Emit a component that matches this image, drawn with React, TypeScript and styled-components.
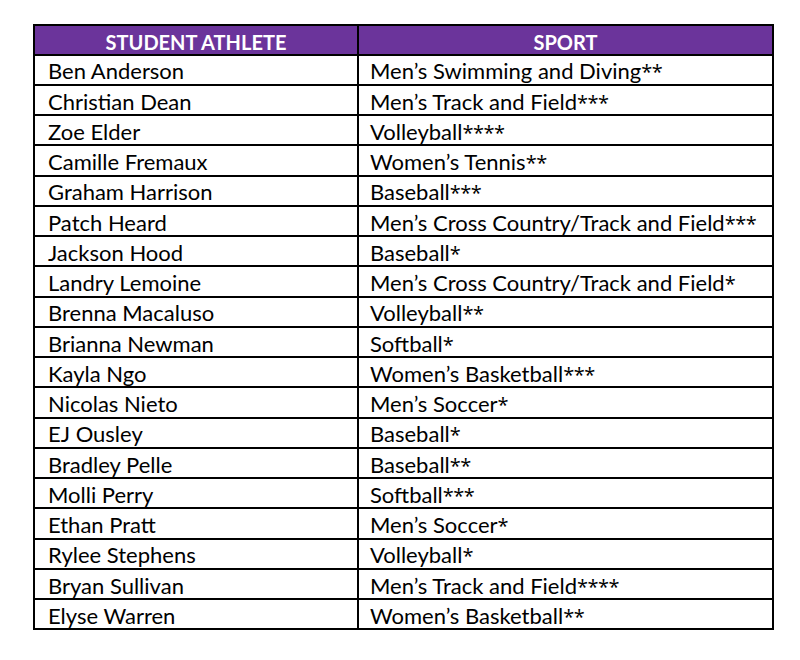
import React from "react";
import styled, { createGlobalStyle } from "styled-components";

const Global = createGlobalStyle`
  html, body { margin: 0; padding: 0; background: #ffffff; }
  body { font-family: Lato, "Open Sans", sans-serif; }
`;

const Page = styled.div`
  width: 800px;
  height: 660px;
  padding: 24px 0 0 33px;
  box-sizing: border-box;
`;

const Table = styled.div`
  width: 741px;
  border: 2px solid #000;
  box-sizing: border-box;
  display: flex;
  flex-direction: column;
`;

const Row = styled.div<{ $header?: boolean; $last?: boolean }>`
  display: grid;
  grid-template-columns: 322px 415px;
  height: ${(p) => (p.$header ? 29.5 : p.$last ? 28.26 : 30.26)}px;
  box-sizing: border-box;
  border-bottom: ${(p) => (p.$last ? "none" : "2px solid #000")};
  background: ${(p) => (p.$header ? "#6B349B" : "#ffffff")};
`;

const Cell = styled.div<{ $divider?: boolean }>`
  display: flex;
  align-items: flex-end;
  box-sizing: border-box;
  padding: 0 0 1.5px ${(p) => (p.$divider ? 11 : 13)}px;
  border-left: ${(p) => (p.$divider ? "2px solid #000" : "none")};
  font-size: 22px;
  line-height: 22px;
  color: #000;
  white-space: nowrap;
  overflow: hidden;
`;

const Text = styled.span`
  display: block;
  height: 22px;
  line-height: 22px;
`;

const Stars = styled.span`
  font-family: "Open Sans", sans-serif;
  font-size: 20px;
  line-height: 0;
  letter-spacing: -0.5px;
`;

const HeadCell = styled.div<{ $divider?: boolean }>`
  display: flex;
  align-items: flex-end;
  justify-content: center;
  box-sizing: border-box;
  padding-bottom: 2px;
  border-left: ${(p) => (p.$divider ? "2px solid #000" : "none")};
  font-size: 20px;
  line-height: 20px;
  font-weight: 700;
  color: #ffffff;
  white-space: nowrap;
`;

const rows: [string, string][] = [
  ["Ben Anderson", "Men’s Swimming and Diving**"],
  ["Christian Dean", "Men’s Track and Field***"],
  ["Zoe Elder", "Volleyball****"],
  ["Camille Fremaux", "Women’s Tennis**"],
  ["Graham Harrison", "Baseball***"],
  ["Patch Heard", "Men’s Cross Country/Track and Field***"],
  ["Jackson Hood", "Baseball*"],
  ["Landry Lemoine", "Men’s Cross Country/Track and Field*"],
  ["Brenna Macaluso", "Volleyball**"],
  ["Brianna Newman", "Softball*"],
  ["Kayla Ngo", "Women’s Basketball***"],
  ["Nicolas Nieto", "Men’s Soccer*"],
  ["EJ Ousley", "Baseball*"],
  ["Bradley Pelle", "Baseball**"],
  ["Molli Perry", "Softball***"],
  ["Ethan Pratt", "Men’s Soccer*"],
  ["Rylee Stephens", "Volleyball*"],
  ["Bryan Sullivan", "Men’s Track and Field****"],
  ["Elyse Warren", "Women’s Basketball**"],
];

function Sport({ text }: { text: string }) {
  const m = text.match(/^(.*?)(\*+)$/);
  if (!m) return <>{text}</>;
  return (
    <>
      {m[1]}
      <Stars>{m[2]}</Stars>
    </>
  );
}

export default function App() {
  return (
    <Page>
      <Global />
      <Table>
        <Row $header>
          <HeadCell>STUDENT ATHLETE</HeadCell>
          <HeadCell $divider>SPORT</HeadCell>
        </Row>
        {rows.map(([name, sport], i) => (
          <Row key={name} $last={i === rows.length - 1}>
            <Cell>
              <Text>{name}</Text>
            </Cell>
            <Cell $divider>
              <Text>
                <Sport text={sport} />
              </Text>
            </Cell>
          </Row>
        ))}
      </Table>
    </Page>
  );
}
